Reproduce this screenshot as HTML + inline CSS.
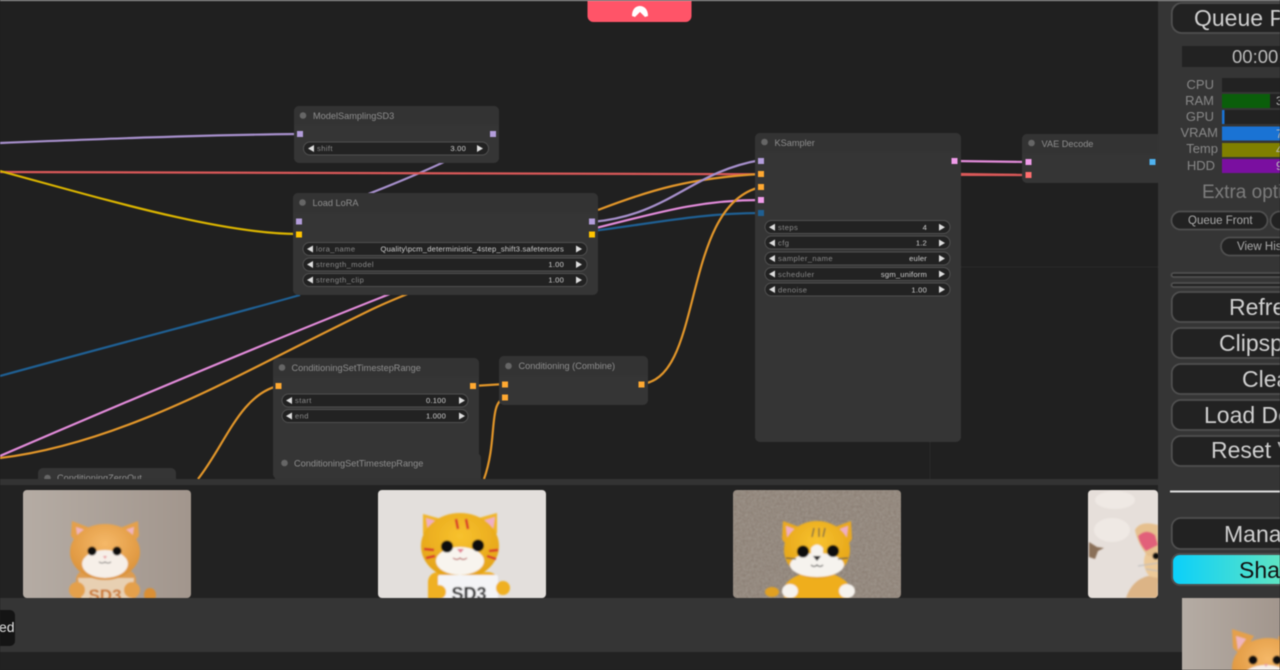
<!DOCTYPE html>
<html><head><meta charset="utf-8">
<style>
html,body{margin:0;padding:0;background:#202020;width:1280px;height:670px;overflow:hidden}
svg{display:block;filter:blur(.4px)}
text{font-family:"Liberation Sans",sans-serif}
.t{font-size:9.2px;fill:#8e8e8e}
.l{font-size:7.6px;fill:#8a8a8a;letter-spacing:.4px}
.v{font-size:7.6px;fill:#d0d0d0;text-anchor:end;letter-spacing:.2px}
.w{fill:#222;stroke:#505050;stroke-width:1}
.a{fill:#ddd}
.n{fill:#353535}
.h{fill:#333}
.d{fill:#666}
.b{fill:#222;stroke:#4f4f4f;stroke-width:1.8}
.bt{font-size:23px;fill:#cfcfcf}
.m{font-size:13px;fill:#888;text-anchor:end}
.wire{fill:none;stroke-width:2.200}
</style></head><body>
<svg width="1280" height="670" viewBox="0 0 1280 670" xmlns="http://www.w3.org/2000/svg">
<defs>
<radialGradient id="o" cx=".5" cy=".35" r=".7"><stop offset="0" stop-color="#f5b868"/><stop offset="1" stop-color="#d98f35"/></radialGradient>
<radialGradient id="y" cx=".5" cy=".35" r=".7"><stop offset="0" stop-color="#f8c22e"/><stop offset="1" stop-color="#e2a015"/></radialGradient>
<linearGradient id="s" x1="0" x2="1"><stop offset="0" stop-color="#0bd0fa"/><stop offset="1" stop-color="#6ee8b8"/></linearGradient>
<linearGradient id="c1" x1="0" x2="1"><stop offset="0" stop-color="#b5aca4"/><stop offset="1" stop-color="#a2968d"/></linearGradient>
<filter id="soft" x="-5%" y="-5%" width="110%" height="110%"><feGaussianBlur stdDeviation=".9"/></filter>
<filter id="noise" x="0" y="0" width="100%" height="100%"><feTurbulence type="fractalNoise" baseFrequency=".35" numOctaves="2"/><feColorMatrix values="0 0 0 0 .5  0 0 0 0 .47  0 0 0 0 .43  .9 0 0 0 -.1"/></filter>
<clipPath id="k1"><rect x="23" y="490" width="168" height="108" rx="4"/></clipPath>
<clipPath id="k2"><rect x="378" y="490" width="168" height="108" rx="4"/></clipPath>
<clipPath id="k3"><rect x="733" y="490" width="168" height="108" rx="4"/></clipPath>
<clipPath id="k4"><rect x="1088" y="490" width="70" height="108" rx="4"/></clipPath>
<clipPath id="k5"><rect x="1182" y="598" width="98" height="72"/></clipPath>
</defs>
<rect width="1280" height="670" fill="#202020"/>
<path d="M930 267V479M780 267H1158" stroke="#2a2a2a" stroke-width="1" fill="none"/>

<!-- wires -->
<g class="wire">
<path class="wire" stroke="#a68fcb" d="M0 143C100 139 200 135 298 134"/>
<path class="wire" stroke="#a68fcb" d="M298 221C340 205 450 165 496 134"/>
<path class="wire" stroke="#d85858" d="M0 172L1027 175"/>
<path class="wire" stroke="#d9b300" d="M0 171C100 198 220 234 298 234"/>
<path class="wire" stroke="#1f5f92" d="M0 376C150 335 230 315 300 295"/>
<path class="wire" stroke="#e08ad8" d="M0 456C130 400 260 345 400 290"/>
<path class="wire" stroke="#e0952a" d="M0 458C110 445 220 385 300 345S380 305 410 293"/>
<path class="wire" stroke="#e0952a" d="M198 479C225 445 240 395 278 386"/>
<path class="wire" stroke="#e0952a" d="M598 210C650 190 690 178 761 174"/>
<path class="wire" stroke="#a68fcb" d="M592 222C670 215 690 172 761 160"/>
<path class="wire" stroke="#e08ad8" d="M592 229C660 212 700 200 761 200"/>
<path class="wire" stroke="#1f5f92" d="M592 231C650 224 700 213 761 213"/>
<path class="wire" stroke="#e0952a" d="M473 386L505 384"/>
<path class="wire" stroke="#e0952a" d="M484 479C498 440 488 402 505 398"/>
<path class="wire" stroke="#e0952a" d="M641 384C705 380 680 205 761 187"/>
<path class="wire" stroke="#e08ad8" d="M954 161L1028 162"/>
<path class="wire" stroke="#d85858" d="M960 174L1028 175"/>
</g>

<!-- ModelSamplingSD3 -->
<rect class="n" x="294" y="106" width="205" height="57" rx="5"/>
<path class="h" d="M294 125V111a5 5 0 0 1 5-5h195a5 5 0 0 1 5 5v14z"/>
<circle class="d" cx="303" cy="115.500" r="3.300"/>
<text class="t" x="313" y="119">ModelSamplingSD3</text>
<rect x="297" y="131" width="6" height="6" fill="#B39DDB"/><rect x="490" y="131" width="6" height="6" fill="#B39DDB"/>
<rect class="w" x="303.500" y="142" width="185" height="13" rx="6.500"/>
<path class="a" d="M308 148.500l6-3.500v7zM483 148.500l-6-3.500v7z"/>
<text class="l" x="317" y="151">shift</text><text class="v" x="466" y="151">3.00</text>

<!-- Load LoRA -->
<rect class="n" x="293" y="193" width="305" height="102" rx="5"/>
<path class="h" d="M293 213V198a5 5 0 0 1 5-5h295a5 5 0 0 1 5 5v15z"/>
<circle class="d" cx="302.500" cy="202.500" r="3.300"/>
<text class="t" x="312.500" y="206">Load LoRA</text>
<rect x="296" y="218.500" width="6" height="6" fill="#B39DDB"/><rect x="296" y="231.500" width="6" height="6" fill="#FFC400"/>
<rect x="589" y="218.500" width="6" height="6" fill="#B39DDB"/><rect x="589" y="231.500" width="6" height="6" fill="#FFC400"/>
<rect class="w" x="303" y="242.500" width="284" height="13" rx="6.500"/>
<rect class="w" x="303" y="258" width="284" height="13" rx="6.500"/>
<rect class="w" x="303" y="273.500" width="284" height="13" rx="6.500"/>
<path class="a" d="M307 249l6-3.500v7zM582 249l-6-3.500v7zM307 264.500l6-3.500v7zM582 264.500l-6-3.500v7zM307 280l6-3.500v7zM582 280l-6-3.500v7z"/>
<text class="l" x="316" y="251.500">lora_name</text><text class="v" x="564" y="251.500">Quality\pcm_deterministic_4step_shift3.safetensors</text>
<text class="l" x="316" y="267">strength_model</text><text class="v" x="564" y="267">1.00</text>
<text class="l" x="316" y="282.500">strength_clip</text><text class="v" x="564" y="282.500">1.00</text>

<!-- KSampler -->
<rect class="n" x="755" y="133" width="206" height="309" rx="5"/>
<path class="h" d="M755 152V138a5 5 0 0 1 5-5h196a5 5 0 0 1 5 5v14z"/>
<circle class="d" cx="764.500" cy="142" r="3.300"/>
<text class="t" x="774.500" y="146">KSampler</text>
<rect x="758" y="158" width="6" height="6" fill="#B39DDB"/>
<rect x="758" y="171" width="6" height="6" fill="#FFA931"/>
<rect x="758" y="184" width="6" height="6" fill="#FFA931"/>
<rect x="758" y="197" width="6" height="6" fill="#F09CEA"/>
<rect x="758" y="210" width="6" height="6" fill="#1f5f92"/>
<rect x="951.500" y="158" width="6" height="6" fill="#F09CEA"/>
<rect class="w" x="765" y="220.500" width="185" height="13" rx="6.500"/>
<rect class="w" x="765" y="236" width="185" height="13" rx="6.500"/>
<rect class="w" x="765" y="252" width="185" height="13" rx="6.500"/>
<rect class="w" x="765" y="267.500" width="185" height="13" rx="6.500"/>
<rect class="w" x="765" y="283" width="185" height="13" rx="6.500"/>
<path class="a" d="M769 227.300l6-3.500v7zM945 227.300l-6-3.500v7zM769 243l6-3.500v7zM945 243l-6-3.500v7zM769 258.500l6-3.500v7zM945 258.500l-6-3.500v7zM769 274l6-3.500v7zM945 274l-6-3.500v7zM769 289.500l6-3.500v7zM945 289.500l-6-3.500v7z"/>
<text class="l" x="778" y="230">steps</text><text class="v" x="927" y="230">4</text>
<text class="l" x="778" y="245.500">cfg</text><text class="v" x="927" y="245.500">1.2</text>
<text class="l" x="778" y="261">sampler_name</text><text class="v" x="927" y="261">euler</text>
<text class="l" x="778" y="277">scheduler</text><text class="v" x="927" y="277">sgm_uniform</text>
<text class="l" x="778" y="292.500">denoise</text><text class="v" x="927" y="292.500">1.00</text>

<!-- VAE Decode -->
<rect class="n" x="1022" y="134" width="140" height="49" rx="5"/>
<path class="h" d="M1022 154V139a5 5 0 0 1 5-5h130a5 5 0 0 1 5 5v15z"/>
<circle class="d" cx="1031.500" cy="143" r="3.300"/>
<text class="t" x="1041.500" y="147">VAE Decode</text>
<rect x="1025.500" y="159" width="6" height="6" fill="#F09CEA"/>
<rect x="1025.500" y="172" width="6" height="6" fill="#FF6E6E"/>
<rect x="1149.500" y="159" width="6" height="6" fill="#4fb3f0"/>

<!-- Conditioning Timestep -->
<rect class="n" x="273" y="358" width="206" height="121" rx="5"/>
<path class="h" d="M273 377V363a5 5 0 0 1 5-5h196a5 5 0 0 1 5 5v14z"/>
<circle class="d" cx="282" cy="367.500" r="3.300"/>
<text class="t" x="291.500" y="371">ConditioningSetTimestepRange</text>
<rect x="275.500" y="383" width="6" height="6" fill="#FFA931"/>
<rect x="470" y="383" width="6" height="6" fill="#FFA931"/>
<rect class="w" x="282" y="394" width="186" height="13" rx="6.500"/>
<rect class="w" x="282" y="409.500" width="186" height="13" rx="6.500"/>
<path class="a" d="M286 400.500l6-3.500v7zM465 400.500l-6-3.500v7zM286 416l6-3.500v7zM465 416l-6-3.500v7z"/>
<text class="l" x="295" y="403">start</text><text class="v" x="446" y="403">0.100</text>
<text class="l" x="295" y="418.500">end</text><text class="v" x="446" y="418.500">1.000</text>

<rect class="n" x="275" y="453" width="206" height="30" rx="5"/>
<circle class="d" cx="284.500" cy="463" r="3.300"/>
<text class="t" x="294" y="466.500">ConditioningSetTimestepRange</text>

<!-- Combine -->
<rect class="n" x="499" y="356" width="149" height="49" rx="5"/>
<path class="h" d="M499 376V361a5 5 0 0 1 5-5h139a5 5 0 0 1 5 5v15z"/>
<circle class="d" cx="508.500" cy="366" r="3.300"/>
<text class="t" x="518.500" y="369">Conditioning (Combine)</text>
<rect x="502" y="381.500" width="6" height="6" fill="#FFA931"/>
<rect x="502" y="394.500" width="6" height="6" fill="#FFA931"/>
<rect x="638.500" y="381.500" width="6" height="6" fill="#FFA931"/>

<!-- ZeroOut -->
<rect class="n" x="38" y="468" width="138" height="20" rx="5"/>
<circle class="d" cx="47.500" cy="478" r="3.300"/>
<text class="t" x="57" y="481">ConditioningZeroOut</text>

<!-- gallery -->
<rect x="0" y="479" width="1160" height="6" fill="#333"/>
<rect x="0" y="485" width="1160" height="113" fill="#222"/>

<!-- cat1 -->
<g clip-path="url(#k1)">
<rect x="23" y="490" width="168" height="108" fill="url(#c1)"/>
<g filter="url(#soft)">
<path d="M72 521l18 7-12 16-7-8zM138 521l-18 7 12 16 7-8z" fill="#e4a04c"/>
<path d="M76 527l9 3-7 10zM134 527l-9 3 7 10z" fill="#eeb5bd"/>
<rect x="76" y="570" width="60" height="35" rx="10" fill="#dd9c50"/>
<path d="M78 578h56l-2 24H82z" fill="#e8d0b2"/>
<ellipse cx="105" cy="552" rx="35" ry="28" fill="url(#o)"/>
<ellipse cx="105" cy="564" rx="23" ry="14" fill="#f6efe8"/>
<circle cx="92" cy="551" r="4.500" fill="#111"/><circle cx="117" cy="551" r="4.500" fill="#111"/>
<path d="M103 556h4l-2 3z" fill="#e89aa0"/>
<path d="M99 562q3 2 6 0q3 2 6 0" fill="none" stroke="#444" stroke-width=".8"/>
<circle cx="77" cy="590" r="8" fill="#e4a04c"/><circle cx="132" cy="590" r="8" fill="#e4a04c"/>
<ellipse cx="150" cy="595" rx="6" ry="7" fill="#d98f35"/>
<text x="105" y="601" text-anchor="middle" font-size="17" font-weight="bold" fill="#c9762a">SD3</text>
</g>
</g>

<!-- cat2 -->
<g clip-path="url(#k2)">
<rect x="378" y="490" width="168" height="108" fill="#e3dfdc"/>
<g filter="url(#soft)">
<path d="M423 514l22 6-16 22-6-8zM497 513l-22 6 16 22 6-8z" fill="#f0b52a"/>
<path d="M426 518l13 4-10 15zM495 517l-13 4 10 15z" fill="#eeb0c4"/>
<rect x="428" y="572" width="70" height="35" rx="10" fill="#efb020"/>
<ellipse cx="460" cy="546" rx="39" ry="33" fill="url(#y)"/>
<ellipse cx="460" cy="561" rx="24" ry="14" fill="#f8f4ee"/>
<path d="M456 519l2 10M466 519l2 10M424 549l10 1M426 558l9-2M498 550l-9 1M496 559l-9-3" stroke="#d8352a" stroke-width="2.500" fill="none"/>
<circle cx="447" cy="546.500" r="6" fill="#111"/><circle cx="478" cy="545.500" r="6" fill="#111"/>
<path d="M457 549h7l-3.500 4z" fill="#e07a8a"/>
<path d="M453 558q4 3 7 0q3 3 7 0" fill="none" stroke="#a33" stroke-width=".9"/>
<rect x="438" y="575" width="60" height="30" rx="2" fill="#f4f4f6"/>
<circle cx="439" cy="592" r="7" fill="#efb020"/><circle cx="503" cy="588" r="7" fill="#efb020"/>
<text x="469" y="600" text-anchor="middle" font-size="18" font-weight="bold" fill="#111">SD3</text>
</g>
</g>

<!-- cat3 -->
<g clip-path="url(#k3)">
<rect x="733" y="490" width="168" height="108" fill="#8d8176"/>
<rect x="733" y="490" width="168" height="108" filter="url(#noise)" opacity=".5"/>
<g filter="url(#soft)">
<path d="M783 521l19 7-13 21-7-10zM851 521l-19 7 13 21 7-10z" fill="#e9a924"/>
<path d="M786 526l11 4-9 14zM848 526l-11 4 9 14z" fill="#eeaec4"/>
<ellipse cx="817" cy="592" rx="34" ry="20" fill="#efae1e"/>
<ellipse cx="817" cy="550" rx="33" ry="29" fill="url(#y)"/>
<ellipse cx="817" cy="565" rx="27" ry="12" fill="#f6f3ee"/>
<path d="M811 548q6-7 12 0v10h-12z" fill="#f6f3ee"/>
<path d="M814 528l-2 9M819 528v9M825 528l-2 9M786 558l10 1M848 558l-10 1" stroke="#554" stroke-width="1.200" fill="none"/>
<circle cx="803" cy="551.500" r="6" fill="#0a0a0a"/><circle cx="833" cy="551" r="6" fill="#0a0a0a"/>
<path d="M813 556h8l-4 5z" fill="#222"/>
<path d="M811 565q3 3 6 0q3 3 6 0" fill="none" stroke="#333" stroke-width="1"/>
<ellipse cx="790" cy="591" rx="8" ry="7" fill="#f6f3ee"/><ellipse cx="847" cy="591" rx="8" ry="7" fill="#f6f3ee"/>
<ellipse cx="772" cy="592" rx="7" ry="5" fill="#e0a020"/>
</g>
</g>

<!-- cat4 -->
<g clip-path="url(#k4)">
<rect x="1088" y="490" width="70" height="108" fill="#e6dfda"/>
<g filter="url(#soft)">
<ellipse cx="1115" cy="500" rx="20" ry="9" fill="#efe9e4"/>
<ellipse cx="1112" cy="530" rx="18" ry="12" fill="#efe9e4"/>
<path d="M1089 542l8 5 7 1-6 3-3 8-6-2z" fill="#8a6f58"/>
<ellipse cx="1174" cy="562" rx="30" ry="25" fill="#ecc998"/>
<path d="M1135 530Q1140 520 1158 525V556H1148Q1138 545 1135 530z" fill="#e6c08e"/>
<path d="M1138 536Q1146 528 1155 535L1158 545 1146 551Q1140 545 1138 536z" fill="#e2607a"/>
<circle cx="1156" cy="556" r="3.500" fill="#111"/>
<path d="M1138 566l20-3M1146 569l12 2" stroke="#bbb" stroke-width="1"/>
<path d="M1126 598q6-18 22-22l10 2v20z" fill="#dcb486"/>
</g>
</g>

<!-- bottom bar -->
<rect x="0" y="598" width="1160" height="54" fill="#353535"/>
<rect x="0" y="652" width="1160" height="18" fill="#222"/>
<rect x="-12" y="610" width="27" height="36" rx="5" fill="#141414"/>
<text x="-1" y="632" font-size="14" fill="#e4e4e4">ed</text>

<!-- right panel -->
<rect x="1158" y="0" width="122" height="670" fill="#353535"/>
<rect x="1158" y="652" width="24" height="18" fill="#222"/>
<rect class="b" x="1171.800" y="3" width="130" height="30" rx="10"/>
<text class="bt" x="1194" y="26">Queue Prompt</text>
<rect x="1182" y="46" width="98" height="21" fill="#222"/>
<text x="1232" y="63" font-size="18.500" fill="#bbb">00:00:00</text>

<g>
<text class="m" x="1214" y="89">CPU</text>
<text class="m" x="1214" y="105">RAM</text>
<text class="m" x="1214" y="121">GPU</text>
<text class="m" x="1218" y="137">VRAM</text>
<text class="m" x="1218" y="153">Temp</text>
<text class="m" x="1215" y="170">HDD</text>
<rect x="1222" y="78" width="58" height="14" fill="#222"/>
<rect x="1222" y="94" width="58" height="14" fill="#222"/>
<rect x="1222" y="94" width="48" height="14" fill="#0b5e0b"/>
<rect x="1222" y="110" width="58" height="14" fill="#222"/>
<rect x="1222" y="110" width="2.500" height="14" fill="#1a73d4"/>
<rect x="1222" y="126.500" width="58" height="14" fill="#1a73d4"/>
<rect x="1222" y="143" width="58" height="14" fill="#808000"/>
<rect x="1222" y="159" width="58" height="14" fill="#7a0fa0"/>
<text x="1276" y="105" font-size="12" fill="#bbb">3</text>
<text x="1276" y="138" font-size="12" fill="#bbb">7</text>
<text x="1276" y="154" font-size="12" fill="#bbb">4</text>
<text x="1276" y="170" font-size="12" fill="#bbb">9</text>
</g>
<text x="1202" y="198" font-size="19" fill="#7c7c7c">Extra options</text>

<rect class="b" x="1171.500" y="211.500" width="96" height="18" rx="9"/>
<text x="1188" y="224" font-size="11.500" fill="#aaa">Queue Front</text>
<rect class="b" x="1270.500" y="211.500" width="60" height="18" rx="9"/>
<rect class="b" x="1221" y="237.500" width="90" height="18" rx="9"/>
<text x="1237" y="250" font-size="11.500" fill="#aaa">View History</text>
<rect class="b" x="1171.500" y="273" width="130" height="4" rx="2"/>
<rect class="b" x="1171.500" y="283" width="130" height="4" rx="2"/>

<rect class="b" x="1171.800" y="292" width="130" height="30" rx="9"/>
<text class="bt" x="1229" y="315">Refresh</text>
<rect class="b" x="1171.800" y="328" width="130" height="30" rx="9"/>
<text class="bt" x="1219" y="351">Clipspace</text>
<rect class="b" x="1171.800" y="364" width="130" height="30" rx="9"/>
<text class="bt" x="1242" y="387">Clear</text>
<rect class="b" x="1171.800" y="400" width="130" height="30" rx="9"/>
<text class="bt" x="1204" y="423">Load Default</text>
<rect class="b" x="1171.800" y="436" width="130" height="30" rx="9"/>
<text class="bt" x="1211" y="458">Reset View</text>
<rect x="1170" y="490.500" width="110" height="2" fill="#ddd"/>
<rect class="b" x="1171.800" y="518" width="130" height="31" rx="9"/>
<text class="bt" x="1224" y="542">Manager</text>
<rect x="1171" y="553" width="130" height="33" rx="9" fill="#4d4d4d"/>
<rect x="1173" y="555" width="128" height="29" rx="7" fill="url(#s)" />
<text x="1239" y="578" font-size="23" fill="#111">Share</text>

<!-- panel cat -->
<g clip-path="url(#k5)">
<rect x="1182" y="598" width="98" height="72" fill="url(#c1)"/>
<g filter="url(#soft)">
<path d="M1232 629l22 7-12 20-9-8zM1296 630l-18 7 10 18z" fill="#e4a04c"/>
<path d="M1236 636l10 3-8 11z" fill="#eeb5bd"/>
<ellipse cx="1268" cy="668" rx="36" ry="30" fill="url(#o)"/>
<ellipse cx="1266" cy="676" rx="22" ry="11" fill="#f6efe8"/>
<circle cx="1253" cy="660" r="4.500" fill="#111"/><circle cx="1277" cy="660" r="4.500" fill="#111"/>
<path d="M1264 664h4l-2 3z" fill="#e89aa0"/>
</g>
</g>

<!-- top -->
<path d="M587.500 0h104v16a6 6 0 0 1-6 6h-92a6 6 0 0 1-6-6z" fill="#ff5468"/>
<path d="M632 16C632 9 636 6 640 6C644 6 648 9 648 16L645 17 640 12 635 17z" fill="#fff"/>
<rect x="0" y="0" width="1280" height="1" fill="#a8a8a8"/>
</svg>
</body></html>
